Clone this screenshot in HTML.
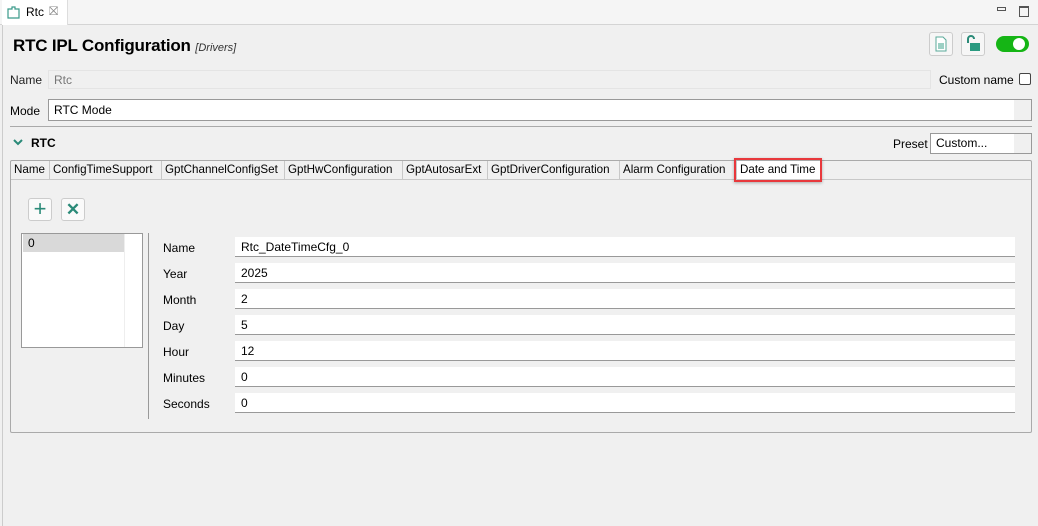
<!DOCTYPE html>
<html><head><style>
*{box-sizing:border-box;margin:0;padding:0}
body{width:1038px;height:526px;background:#f0f0f0;font-family:"Liberation Sans",sans-serif;font-size:12px;color:#000;position:relative;overflow:hidden}
.a{position:absolute}
.inp{position:absolute;background:#fff;border-bottom:1px solid #999;height:20px;padding:3px 6px;font-size:12px}
.lbl{position:absolute;font-size:12px}
.tab{position:absolute;top:161px;height:18px;line-height:18px;padding:0 0 0 3px;border-right:1px solid #c8c8c8;font-size:11.6px;white-space:nowrap;overflow:hidden}
</style></head><body>
<div class="a" style="left:0;top:0;width:1038px;height:25px;background:#f5f5f5;border-bottom:1px solid #d4d4d4"></div>
<div class="a" style="left:2px;top:0;width:66px;height:25px;background:#fff;border-right:1px solid #ddd"></div>
<svg class="a" style="left:7px;top:5px" width="14" height="15" viewBox="0 0 14 15"><path d="M1 4h4v-2h3v2h4v9h-11z" fill="none" stroke="#3a9a8a" stroke-width="1.2"/></svg>
<div class="lbl" style="left:26px;top:5px">Rtc</div>
<div class="lbl" style="left:49px;top:4px;color:#888">⛝</div>
<div class="a" style="left:997px;top:7px;width:9px;height:4px;border:1px solid #555"></div>
<div class="a" style="left:1019px;top:6px;width:10px;height:11px;border:1px solid #555;border-top-width:2px"></div>
<div class="a" style="left:2px;top:25px;width:1px;height:501px;background:#ccc"></div>
<div class="lbl" style="left:13px;top:36px;font-size:17px;font-weight:bold;letter-spacing:-0.2px">RTC IPL Configuration <span style="font-size:11px;font-weight:normal;font-style:italic;color:#333;letter-spacing:0">[Drivers]</span></div>
<div class="a" style="left:929px;top:32px;width:24px;height:24px;border:1px solid #ccc;border-radius:3px;background:#f6f6f6"></div>
<svg class="a" style="left:935px;top:36px" width="12" height="16"><path d="M1 1h7l3 3v11h-10z" fill="#fff" stroke="#5aaa9a"/><rect x="3" y="7" width="6" height="6" fill="#9cd0c4"/></svg>
<div class="a" style="left:961px;top:32px;width:24px;height:24px;border:1px solid #ccc;border-radius:3px;background:#f6f6f6"></div>
<svg class="a" style="left:965px;top:35px" width="16" height="18"><path d="M3 8v-4a3 3 0 0 1 6 0" fill="none" stroke="#2a8a78" stroke-width="2"/><rect x="5" y="8" width="10" height="8" fill="#2a9a80"/></svg>
<div class="a" style="left:996px;top:36px;width:33px;height:16px;border-radius:8px;background:#15b515"></div>
<div class="a" style="left:1013px;top:38px;width:12px;height:12px;border-radius:6px;background:#fff"></div>
<div class="lbl" style="left:10px;top:73px;color:#222">Name</div>
<div class="a" style="left:48px;top:70px;width:883px;height:19px;background:#f0f0f0;border:1px solid #e4e4e4;padding:2px 5px;color:#777">Rtc</div>
<div class="lbl" style="left:939px;top:73px">Custom name</div>
<div class="a" style="left:1019px;top:73px;width:12px;height:12px;border:1px solid #444;border-radius:2px;background:#fff"></div>
<div class="lbl" style="left:10px;top:104px">Mode</div>
<div class="a" style="left:48px;top:99px;width:984px;height:22px;background:#fff;border:1px solid #999;padding:3px 5px">RTC Mode</div>
<div class="a" style="left:1014px;top:100px;width:17px;height:20px;background:#f0f0f0"></div>
<div class="a" style="left:10px;top:126px;width:1022px;height:1px;background:#aaa"></div>
<svg class="a" style="left:13px;top:139px" width="10" height="8"><path d="M1 1l4 4 4-4" fill="none" stroke="#2a8a78" stroke-width="2"/></svg>
<div class="lbl" style="left:31px;top:136px;font-weight:bold">RTC</div>
<div class="lbl" style="left:893px;top:137px">Preset</div>
<div class="a" style="left:930px;top:133px;width:102px;height:21px;background:#fff;border:1px solid #999;padding:2px 5px">Custom...</div>
<div class="a" style="left:1014px;top:134px;width:17px;height:19px;background:#f0f0f0"></div>
<div class="a" style="left:10px;top:160px;width:1022px;height:273px;border:1px solid #aaa;border-radius:2px"></div>
<div class="a" style="left:11px;top:179px;width:1020px;height:1px;background:#c8c8c8"></div>
<div class="tab" style="left:11px;width:39px">Name</div>
<div class="tab" style="left:50px;width:112px">ConfigTimeSupport</div>
<div class="tab" style="left:162px;width:123px">GptChannelConfigSet</div>
<div class="tab" style="left:285px;width:118px">GptHwConfiguration</div>
<div class="tab" style="left:403px;width:85px">GptAutosarExt</div>
<div class="tab" style="left:488px;width:132px">GptDriverConfiguration</div>
<div class="tab" style="left:620px;width:117px">Alarm Configuration</div>
<div class="tab" style="left:737px;width:83px;background:#fff;border-right:none">Date and Time</div>
<div class="a" style="left:734px;top:158px;width:88px;height:24px;border:2px solid #e8383c;box-shadow:0 1px 3px rgba(0,0,0,.3)"></div>
<div class="a" style="left:28px;top:198px;width:24px;height:23px;border:1px solid #ccc;border-radius:3px;background:#fafafa;color:#2a8a78;font-size:22px;line-height:19px;text-align:center">+</div>
<div class="a" style="left:61px;top:198px;width:24px;height:23px;border:1px solid #ccc;border-radius:3px;background:#fafafa;color:#2a8a78;font-size:17px;line-height:21px;text-align:center;font-weight:bold">✕</div>
<div class="a" style="left:21px;top:233px;width:122px;height:115px;border:1px solid #999;background:#fff"></div>
<div class="a" style="left:23px;top:234px;width:101px;height:18px;background:#d9d9d9;padding:2px 5px">0</div>
<div class="a" style="left:124px;top:234px;width:1px;height:113px;background:#eee"></div>
<div class="a" style="left:148px;top:233px;width:1px;height:186px;background:#999"></div>
<div class="lbl" style="left:163px;top:241px">Name</div><div class="inp" style="left:235px;top:237px;width:780px">Rtc_DateTimeCfg_0</div>
<div class="lbl" style="left:163px;top:267px">Year</div><div class="inp" style="left:235px;top:263px;width:780px">2025</div>
<div class="lbl" style="left:163px;top:293px">Month</div><div class="inp" style="left:235px;top:289px;width:780px">2</div>
<div class="lbl" style="left:163px;top:319px">Day</div><div class="inp" style="left:235px;top:315px;width:780px">5</div>
<div class="lbl" style="left:163px;top:345px">Hour</div><div class="inp" style="left:235px;top:341px;width:780px">12</div>
<div class="lbl" style="left:163px;top:371px">Minutes</div><div class="inp" style="left:235px;top:367px;width:780px">0</div>
<div class="lbl" style="left:163px;top:397px">Seconds</div><div class="inp" style="left:235px;top:393px;width:780px">0</div>
</body></html>
